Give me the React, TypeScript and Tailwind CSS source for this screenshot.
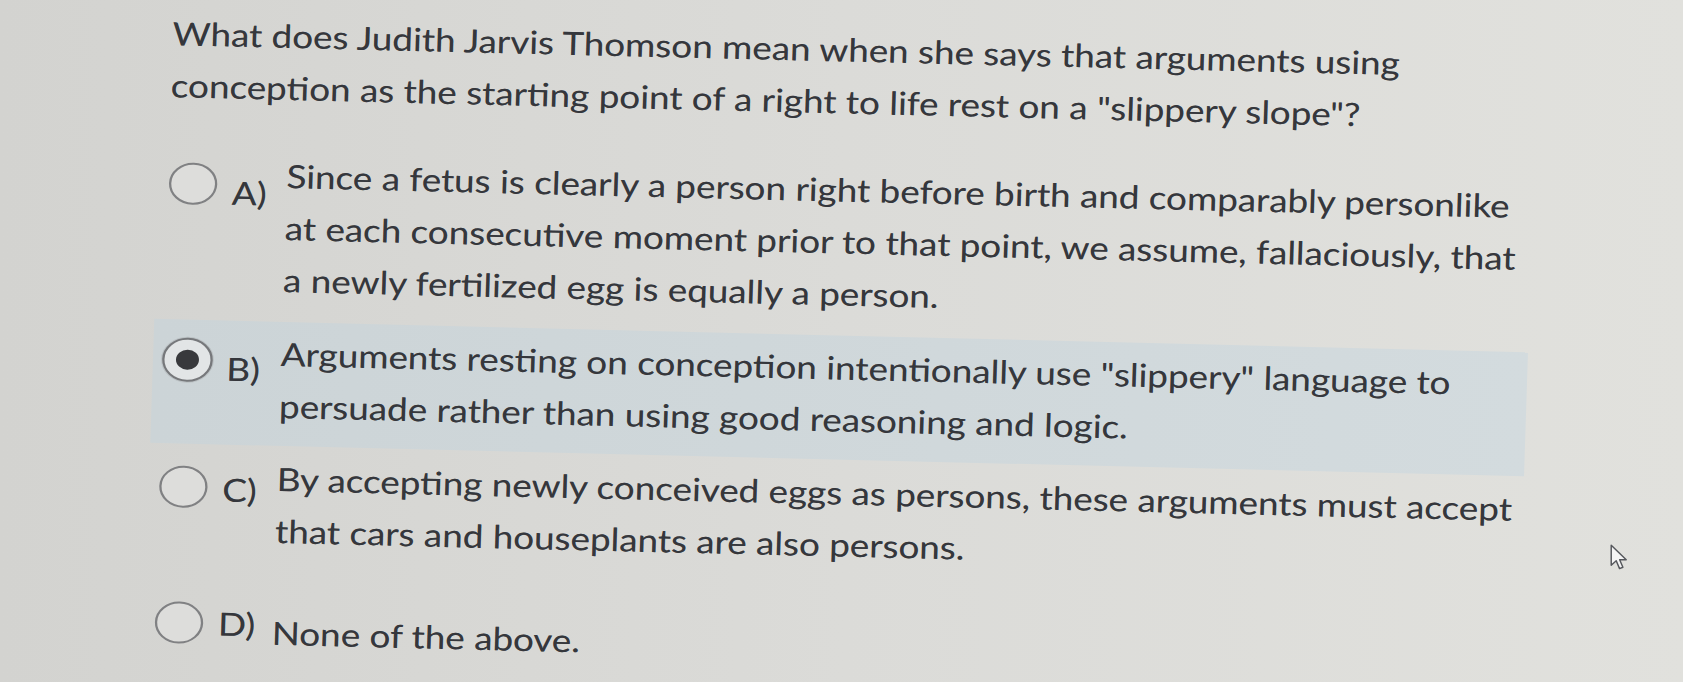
import React from "react";

const Radio = ({ checked = false }: { checked?: boolean }) =>
  checked ? (
    <div className="w-[44px] h-[44px] shrink-0 rounded-full border-2 border-[#76787b] bg-[#e2e5e6] flex items-center justify-center shadow-[0_0_0_1px_rgba(120,120,120,0.2)]">
      <div className="w-[20px] h-[20px] rounded-full bg-[#38393c]" />
    </div>
  ) : (
    <div className="w-[42px] h-[42px] shrink-0 rounded-full border-2 border-[#808183] bg-[#dddddb]" />
  );

export default function App() {
  return (
    <div
      className="relative w-[1683px] h-[682px] overflow-hidden bg-linear-to-r from-[#d3d3d0] via-[#dbdbd8] to-[#e1e1dd] text-[#35373c] [text-shadow:0_0_0.5px_rgba(40,42,48,0.45)]"
      style={{ fontFamily: "Lato, 'Open Sans', sans-serif" }}
    >
      <div className="w-[1464px] origin-top-left [transform:scaleX(1.15)_rotate(1.6deg)] pl-[143px] pt-[3px] text-[32px] leading-[52px]">
        <p className="ml-[8px]">
          What does Judith Jarvis Thomson mean when she says that arguments using
          <br />
          conception as the starting point of a right to life rest on a "slippery slope"?
        </p>

        <div className="mt-[36px] flex items-start pl-[9px]">
          <div className="mt-[15px]">
            <Radio />
          </div>
          <span className="mt-[18px] ml-[13px] w-[47px] shrink-0">A)</span>
          <p>
            Since a fetus is clearly a person right before birth and comparably personlike
            <br />
            at each consecutive moment prior to that point, we assume, fallaciously, that
            <br />
            a newly fertilized egg is equally a person.
          </p>
        </div>

        <div className="mt-[16px] w-[1195px] flex items-start pl-[8px] pt-[6px] pb-[14px] bg-linear-to-r from-[#ccd4d7] to-[#d3dbde]">
          <div className="mt-[12px]">
            <Radio checked />
          </div>
          <span className="mt-[16px] ml-[12px] w-[47px] shrink-0">B)</span>
          <p>
            Arguments resting on conception intentionally use "slippery" language to
            <br />
            persuade rather than using good reasoning and logic.
          </p>
        </div>

        <div className="mt-[7px] flex items-start pl-[9px]">
          <div className="mt-[15px]">
            <Radio />
          </div>
          <span className="mt-[12px] ml-[13px] w-[47px] shrink-0">C)</span>
          <p>
            By accepting newly conceived eggs as persons, these arguments must accept
            <br />
            that cars and houseplants are also persons.
          </p>
        </div>

        <div className="mt-[42px] flex items-start pl-[9px]">
          <div className="mt-[5px]">
            <Radio />
          </div>
          <span className="ml-[13px] w-[47px] shrink-0">D)</span>
          <p className="mt-[8px]">None of the above.</p>
        </div>
      </div>

      <svg
        className="absolute left-[1609px] top-[543px]"
        width="20"
        height="29"
        viewBox="0 0 18 26"
      >
        <path
          d="M2 2 L2 20 L6.5 16 L9.5 23 L12.5 21.8 L9.6 15 L15.5 15 Z"
          fill="#f4f4f4"
          stroke="#55575c"
          strokeWidth="1.3"
          strokeLinejoin="round"
        />
      </svg>
    </div>
  );
}
